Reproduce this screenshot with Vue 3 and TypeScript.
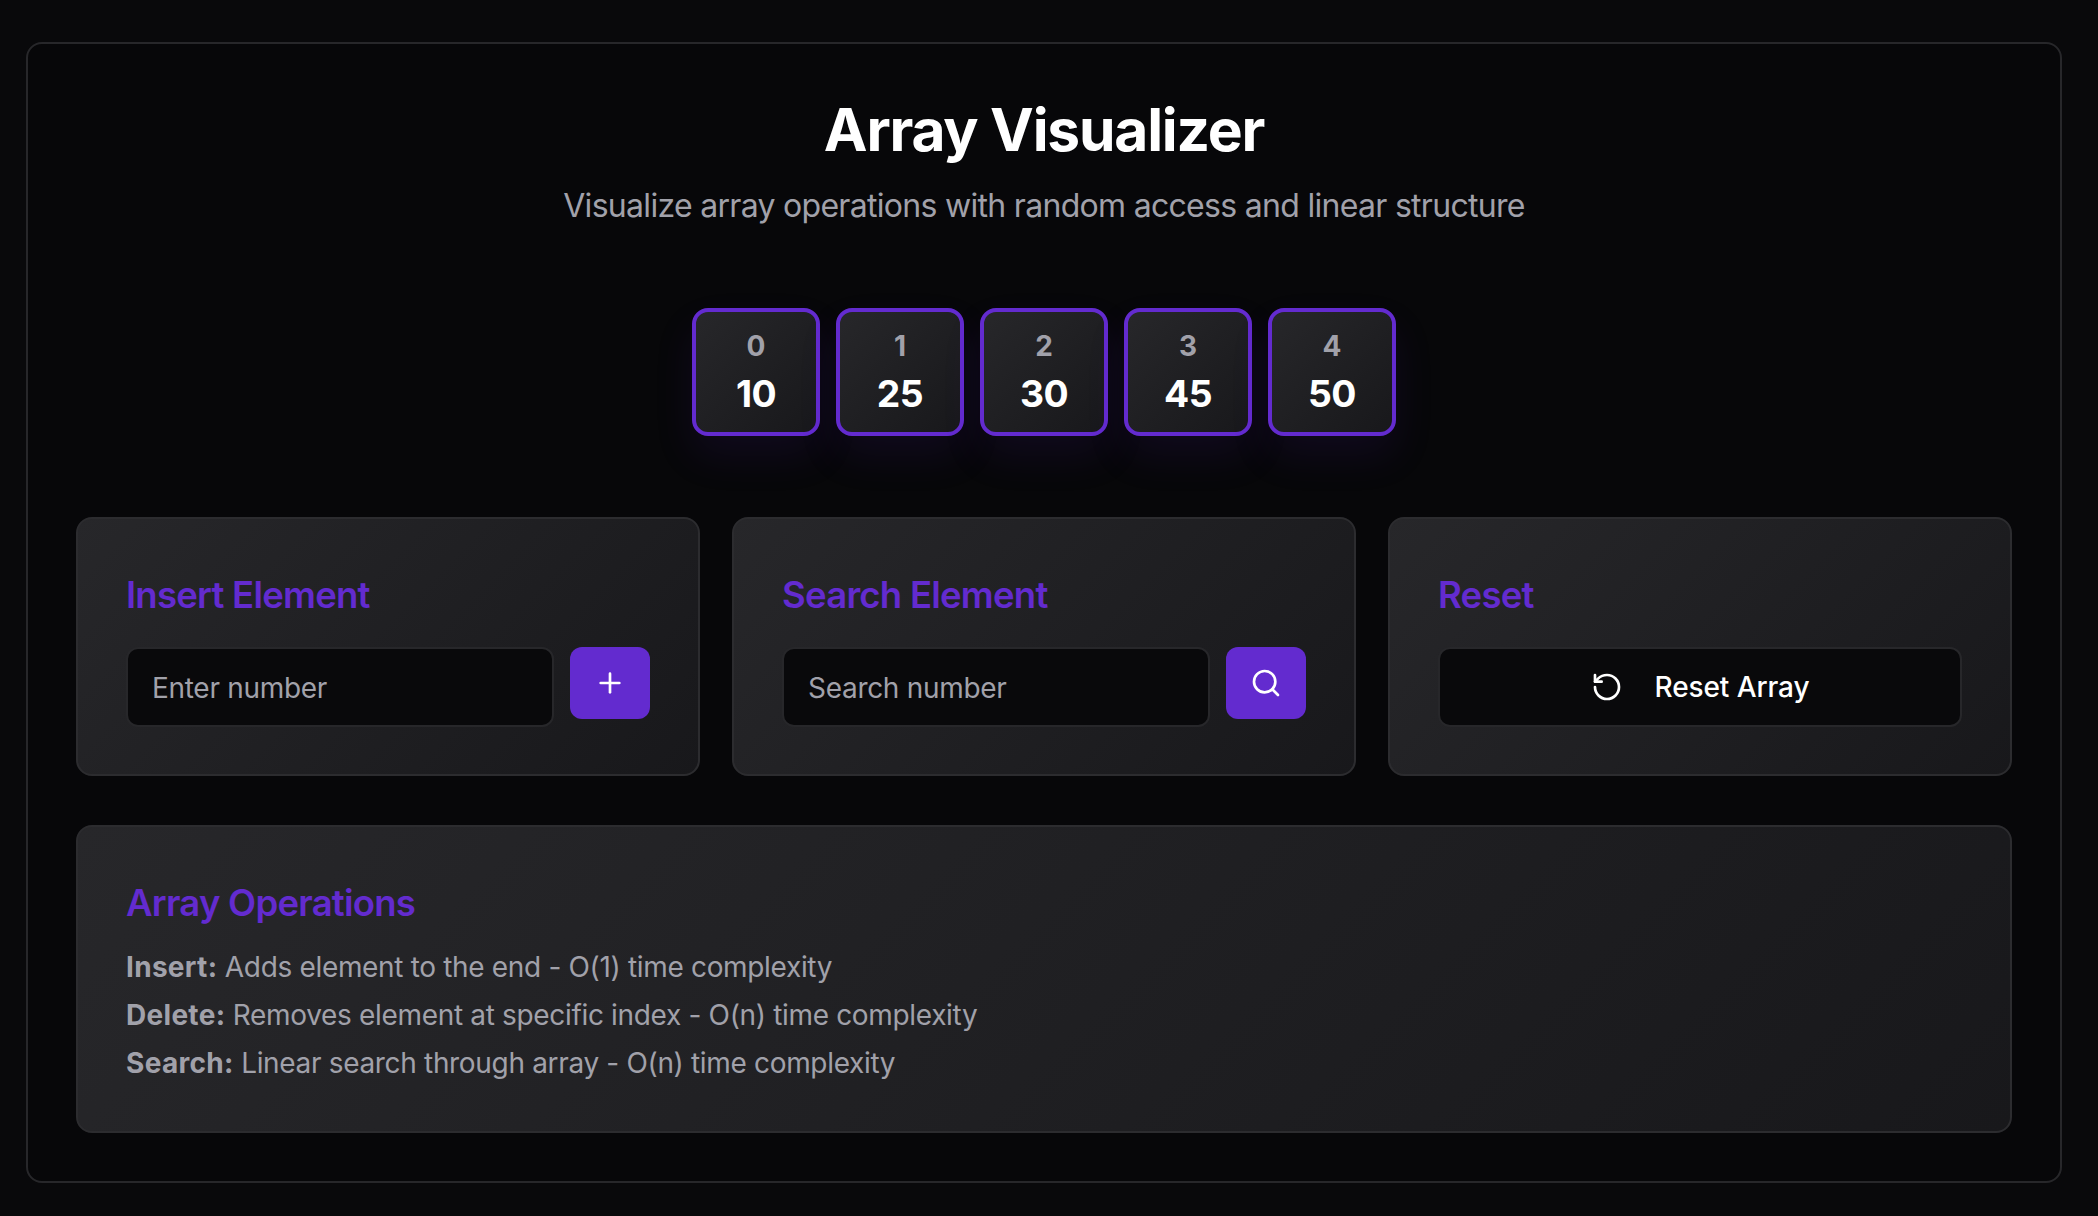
<script setup lang="ts">
const cells = [
  { index: 0, value: 10 },
  { index: 1, value: 25 },
  { index: 2, value: 30 },
  { index: 3, value: 45 },
  { index: 4, value: 50 },
]
</script>

<template>
  <div class="page">
    <main class="shell">
      <header class="head">
        <h1>Array Visualizer</h1>
        <p>Visualize array operations with random access and linear structure</p>
      </header>

      <div class="cells">
        <div v-for="c in cells" :key="c.index" class="cell">
          <span class="idx">{{ c.index }}</span>
          <span class="val">{{ c.value }}</span>
        </div>
      </div>

      <section class="cards">
        <div class="card">
          <h2>Insert Element</h2>
          <div class="row">
            <input class="field" placeholder="Enter number" />
            <button class="go" aria-label="Insert">
              <svg viewBox="0 0 24 24" class="ico"><path d="M5 12h14" /><path d="M12 5v14" /></svg>
            </button>
          </div>
        </div>
        <div class="card">
          <h2>Search Element</h2>
          <div class="row">
            <input class="field" placeholder="Search number" />
            <button class="go" aria-label="Search">
              <svg viewBox="0 0 24 24" class="ico"><circle cx="11" cy="11" r="8" /><path d="m21 21-4.3-4.3" /></svg>
            </button>
          </div>
        </div>
        <div class="card">
          <h2>Reset</h2>
          <button class="reset">
            <svg viewBox="0 0 24 24" class="ico"><path d="M3 12a9 9 0 1 0 9-9 9.75 9.75 0 0 0-6.74 2.74L3 8" /><path d="M3 3v5h5" /></svg>
            <span>Reset Array</span>
          </button>
        </div>
      </section>

      <section class="card info">
        <h2>Array Operations</h2>
        <p><strong>Insert:</strong> Adds element to the end - O(1) time complexity</p>
        <p><strong>Delete:</strong> Removes element at specific index - O(n) time complexity</p>
        <p><strong>Search:</strong> Linear search through array - O(n) time complexity</p>
      </section>
    </main>
  </div>
</template>

<style>
html, body { margin: 0; background: #09090b; }
</style>

<style scoped>
.page {
  min-height: 1216px;
  box-sizing: border-box;
  padding: 42px 36px 0 26px;
  background: #09090b;
  font-family: Inter, "Liberation Sans", sans-serif;
}
.shell {
  box-sizing: border-box;
  height: 1141px;
  padding: 48px;
  border: 2px solid #27272a;
  border-radius: 16px;
  background: #070709;
}
.head { text-align: center; }
h1 {
  margin: 0;
  font-size: 58.67px;
  line-height: 76px;
  font-weight: 700;
  letter-spacing: -1.2px;
  color: #fff;
}
.head p {
  margin: 16px 0 0;
  font-size: 32px;
  line-height: 43px;
  letter-spacing: -0.7px;
  color: #a1a1aa;
}
.cells {
  margin-top: 81px;
  display: flex;
  justify-content: center;
  gap: 16px;
}
.cell {
  box-sizing: border-box;
  width: 128px;
  height: 128px;
  border: 4px solid #632bcf;
  border-radius: 16px;
  background: linear-gradient(135deg, #27272a, #18181b);
  box-shadow: 0 20px 40px rgba(98, 41, 208, 0.1);
  display: flex;
  flex-direction: column;
  align-items: center;
  justify-content: center;
  gap: 9px;
}
.idx { font-size: 28px; line-height: 34px; font-weight: 700; color: #a1a1aa; }
.val { font-size: 37.3px; line-height: 44px; font-weight: 700; letter-spacing: -0.5px; color: #fff; }
.cards {
  margin-top: 81px;
  display: grid;
  grid-template-columns: repeat(3, minmax(0, 1fr));
  gap: 32px;
}
.card {
  box-sizing: border-box;
  padding: 48px;
  height: 259px;
  border: 2px solid #2c2c2f;
  border-radius: 16px;
  background: linear-gradient(135deg, #27272a, #18181b);
}
h2 {
  margin: 0 0 24px;
  font-size: 36.5px;
  line-height: 56px;
  font-weight: 600;
  letter-spacing: -0.75px;
  color: #632bcf;
}
.row { display: flex; gap: 16px; align-items: flex-start; }
.field {
  flex: 1;
  min-width: 0;
  box-sizing: border-box;
  height: 80px;
  padding: 2px 24px 0;
  border: 2.6px solid #27272a;
  border-radius: 12px;
  background: #09090b;
  color: #fff;
  font: 400 28px Inter, sans-serif;
  letter-spacing: -0.3px;
  outline: none;
}
.field::placeholder { color: #a1a1aa; opacity: 1; }
.go {
  flex: none;
  width: 80px;
  height: 72px;
  border: 0;
  border-radius: 12px;
  background: #632bcf;
  display: flex;
  align-items: center;
  justify-content: center;
  padding: 0;
}
.ico {
  width: 32px;
  height: 32px;
  fill: none;
  stroke: #fff;
  stroke-width: 2;
  stroke-linecap: round;
  stroke-linejoin: round;
}
.reset {
  box-sizing: border-box;
  width: 100%;
  height: 80px;
  border: 2.6px solid #27272a;
  border-radius: 12px;
  background: #09090b;
  color: #fff;
  font: 500 28px Inter, sans-serif;
  letter-spacing: -0.1px;
  display: flex;
  align-items: center;
  justify-content: center;
  gap: 32px;
}
.info {
  margin-top: 49px;
  height: 308px;
}
.info h2 { margin-bottom: 12px; }
.info p {
  margin: 0;
  font-size: 28px;
  line-height: 48px;
  letter-spacing: -0.33px;
  color: #a1a1aa;
}
.info strong { font-weight: 700; letter-spacing: 0.3px; }
</style>
